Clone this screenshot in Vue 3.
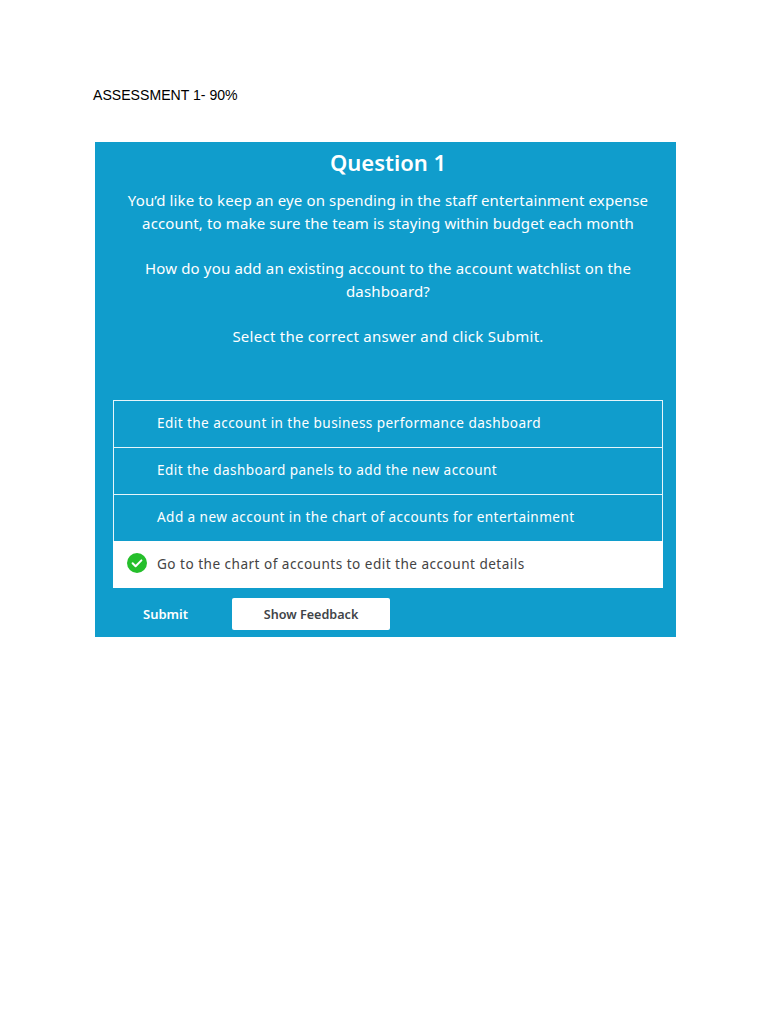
<script setup>
const options = [
  { text: 'Edit the account in the business performance dashboard', correct: false },
  { text: 'Edit the dashboard panels to add the new account', correct: false },
  { text: 'Add a new account in the chart of accounts for entertainment', correct: false },
  { text: 'Go to the chart of accounts to edit the account details', correct: true }
]
</script>

<template>
  <main class="page">
    <h1 class="label">ASSESSMENT 1- 90%</h1>
    <section class="card">
      <h2 class="title">Question 1</h2>
      <div class="prompt">
        <p>You’d like to keep an eye on spending in the staff entertainment expense<br>account, to make sure the team is staying within budget each month</p>
        <p>How do you add an existing account to the account watchlist on the<br>dashboard?</p>
        <p>Select the correct answer and click Submit.</p>
      </div>
      <ul class="options">
        <li v-for="o in options" :key="o.text" class="option" :class="{ correct: o.correct }">
          <span class="mark">
            <svg v-if="o.correct" width="20" height="20" viewBox="0 0 20 20">
              <circle cx="10" cy="10" r="10" fill="#25bf2b" />
              <path d="M5.6 10.2l3 3 5.8-5.8" fill="none" stroke="#fff" stroke-width="2" stroke-linecap="round" stroke-linejoin="round" />
            </svg>
          </span>
          <span class="option-text">{{ o.text }}</span>
        </li>
      </ul>
      <div class="actions">
        <button class="submit" type="button">Submit</button>
        <button class="feedback" type="button">Show Feedback</button>
      </div>
    </section>
  </main>
</template>

<style>
html, body { margin: 0; background: #fff; }
</style>

<style scoped>
.page {
  min-height: 1024px;
  box-sizing: border-box;
  padding: 87px 92px 0 93px;
}
.label {
  margin: 0;
  font: 400 14.1px/17px "Liberation Sans", Arial, sans-serif;
  color: #000;
}
.card {
  margin: 38px 0 0 2px;
  height: 495px;
  box-sizing: border-box;
  background: #109dcc;
  color: #fff;
  font-family: "Noto Sans", sans-serif;
  padding: 6px 13px 0 18px;
}
.title {
  margin: 0;
  text-align: center;
  font-size: 22px;
  line-height: 28px;
  font-weight: 600;
}
.prompt {
  margin-top: 13px;
  text-align: center;
  font-size: 15px;
  line-height: 23px;
  letter-spacing: 0.13px;
}
.prompt p { margin: 0 0 22px; }
.prompt p:nth-child(2) { letter-spacing: 0.16px; }
.prompt p:last-child { margin-bottom: 0; letter-spacing: 0.26px; }
.options {
  list-style: none;
  margin: 52px 0 0;
  padding: 0;
}
.option {
  height: 47px;
  box-sizing: border-box;
  display: flex;
  align-items: center;
  border: 1px solid #e6f5fa;
  border-bottom-width: 0;
  font-size: 13.6px;
  letter-spacing: 0.42px;
}
.option-text { margin-top: -3px; }
.option.correct {
  background: #fff;
  color: #444;
  border: 0;
  padding-left: 1px;
  letter-spacing: 0.47px;
}
.option.correct .option-text { margin-top: -2px; }
.mark {
  width: 43px;
  display: flex;
  justify-content: flex-start;
  padding-left: 13px;
  box-sizing: border-box;
}
.option.correct .mark { margin-top: -3px; }
.actions {
  display: flex;
  align-items: center;
  margin-top: 10px;
}
button {
  font-family: inherit;
  font-size: 13px;
  font-weight: 600;
  border: 0;
  padding: 0;
}
.submit {
  width: 119px;
  height: 32px;
  background: transparent;
  color: #fff;
  padding-right: 14px;
  box-sizing: border-box;
}
.feedback {
  width: 158px;
  height: 32px;
  background: #fff;
  color: #3f4448;
  border-radius: 2px;
  font-size: 12.6px;
}
</style>
